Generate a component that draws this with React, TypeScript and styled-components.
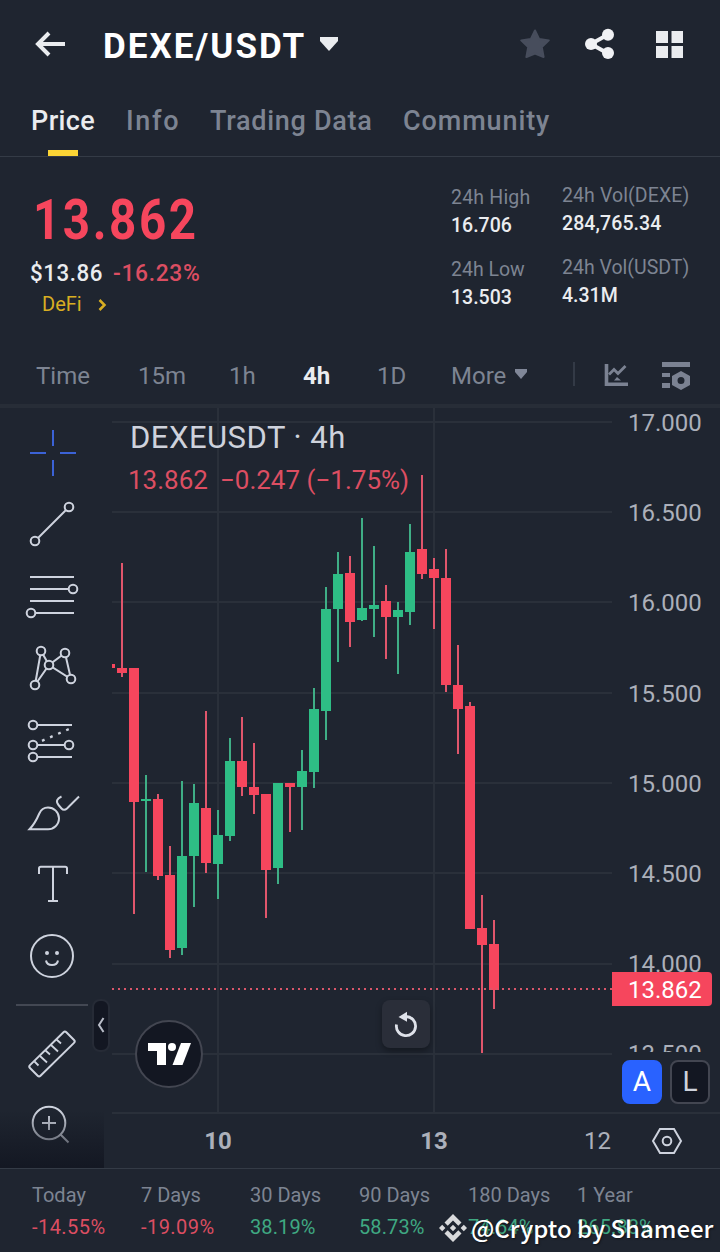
import React from "react";
import styled, { createGlobalStyle } from "styled-components";

const c = {
  bg: "#1f2530",
  line: "#343b46",
  grid: "#2a303a",
  muted: "#7d8492",
  text: "#eaecef",
  red: "#f6465d",
  redSoft: "#dc4e62",
  green: "#2ebd85",
  greenSoft: "#3fa982",
  yellow: "#fcd535",
  gold: "#d8ae22",
  icon: "#ced3de",
  axis: "#acb0ba",
};

const GlobalStyle = createGlobalStyle`
  * { box-sizing: border-box; }
  body { margin: 0; background: ${c.bg}; }
`;

const Page = styled.div`
  position: relative;
  width: 720px;
  height: 1252px;
  overflow: hidden;
  display: flex;
  flex-direction: column;
  background: ${c.bg};
  color: ${c.text};
  font-family: Roboto, "Liberation Sans", sans-serif;
  white-space: nowrap;
`;

const Label = styled.span<{ $ls?: number; $sx?: number }>`
  display: inline-block;
  letter-spacing: ${(p) => p.$ls ?? 0}px;
  transform: ${(p) => (p.$sx ? `scaleX(${p.$sx})` : "none")};
  transform-origin: left center;
`;

const Header = styled.header`
  height: 90px;
  display: flex;
  align-items: center;
  padding: 0 0 2px 34px;
`;
const Pair = styled.h1`
  margin: 4px 0 0 37px;
  width: 203px;
  font-size: 35px;
  font-weight: 700;
  color: #fff;
`;
const HeaderActions = styled.div`
  margin-left: auto;
  display: flex;
  align-items: center;
  gap: 34px;
  padding-right: 37px;
`;

const Tabs = styled.nav`
  height: 67px;
  display: flex;
  padding-left: 31px;
  border-bottom: 1px solid ${c.line};
`;
const Tab = styled.div<{ $active?: boolean; $w: number }>`
  width: ${(p) => p.$w}px;
  display: flex;
  flex-direction: column;
  justify-content: space-between;
  font-size: 27px;
  line-height: 63px;
  font-weight: 500;
  color: ${(p) => (p.$active ? c.text : c.muted)};
`;
const Underline = styled.div`
  width: 30px;
  height: 6px;
  flex: none;
  margin: -3px 0 0 17px;
  background: ${c.yellow};
`;

const Summary = styled.section`
  height: 189px;
  display: flex;
`;
const PriceBlock = styled.div`
  width: 451px;
  padding: 29px 0 0 30px;
`;
const LastPrice = styled.div`
  font-size: 56px;
  line-height: 68px;
  font-weight: 700;
  color: ${c.red};
  padding-left: 3px;
`;
const SubPrice = styled.div`
  display: flex;
  font-size: 24px;
  line-height: 38px;
  font-weight: 500;
`;
const Fiat = styled.div`
  width: 83px;
`;
const Change = styled.div`
  color: ${c.redSoft};
`;
const Tag = styled.div`
  display: flex;
  align-items: center;
  gap: 16px;
  padding-left: 12px;
  font-size: 20px;
  line-height: 25px;
  color: ${c.gold};
`;
const StatColumn = styled.dl<{ $w: number; $top: number; $lh: number }>`
  width: ${(p) => p.$w}px;
  margin: 0;
  padding-top: ${(p) => p.$top}px;
  font-size: 19.5px;
  dt {
    color: ${c.muted};
    line-height: ${(p) => p.$lh}px;
  }
  dd {
    margin: 0 0 ${(p) => 44 - p.$lh}px;
    line-height: 28px;
    font-weight: 500;
  }
`;

const Intervals = styled.nav`
  height: 62px;
  display: flex;
  align-items: center;
  padding: 2px 0 0 36px;
  border-bottom: 4px solid #272d37;
  font-size: 24px;
  color: ${c.muted};
`;
const Interval = styled.div<{ $w: number; $active?: boolean }>`
  width: ${(p) => p.$w}px;
  color: ${(p) => (p.$active ? c.text : c.muted)};
  font-weight: ${(p) => (p.$active ? 700 : 400)};
`;
const Divider = styled.div`
  width: 2px;
  height: 24px;
  margin: -4px 28px 0 45px;
  background: #333a46;
`;

const Chart = styled.main`
  height: 760px;
  display: flex;
`;
const Toolbar = styled.aside`
  position: relative;
  width: 104px;
  margin-right: 8px;
  padding-top: 9px;
  display: flex;
  flex-direction: column;
`;
const ToolRule = styled.hr`
  width: 72px;
  height: 2px;
  border: 0;
  margin: 11px 16px 12px;
  flex: none;
  background: #434853;
`;
const Fade = styled.div`
  position: absolute;
  inset: auto 0 0 0;
  height: 58px;
  background: linear-gradient(rgba(19, 23, 34, 0), rgba(19, 23, 34, 0.95));
`;
const Collapse = styled.button`
  position: absolute;
  left: 92px;
  top: 591px;
  width: 18px;
  height: 53px;
  padding: 0 0 1px;
  display: grid;
  place-items: center;
  border: 2px solid #262b36;
  border-radius: 8px;
  background: #131722;
`;
const ChartBody = styled.div`
  width: 608px;
  display: flex;
  flex-direction: column;
`;
const PlotRow = styled.div`
  height: 704px;
  display: flex;
`;
const Plot = styled.div`
  position: relative;
  width: 500px;
`;
const PlotSvg = styled.svg`
  display: block;
`;
const Legend = styled.div`
  position: absolute;
  left: 18px;
  top: 11px;
`;
const LegendTitle = styled.div`
  font-size: 31px;
  line-height: 38px;
  color: #ced2dc;
`;
const LegendValues = styled.div`
  display: flex;
  gap: 12px;
  margin: 1px 0 0 -2px;
  font-size: 26px;
  line-height: 44px;
  color: ${c.redSoft};
`;
const TvBadge = styled.div`
  position: absolute;
  left: 23px;
  top: 612px;
  width: 68px;
  height: 68px;
  display: grid;
  place-items: center;
  border: 2px solid #434651;
  border-radius: 50%;
  background: #131722;
`;
const ResetButton = styled.button`
  position: absolute;
  left: 270px;
  top: 592px;
  width: 48px;
  height: 48px;
  padding: 0;
  border: 0;
  border-radius: 8px;
  background: #2a2e39;
  box-shadow: 0 3px 6px rgba(0, 0, 0, 0.35);
`;

const PriceScale = styled.div`
  position: relative;
  width: 108px;
  height: 704px;
`;
const ScaleLabels = styled.div`
  height: 644px;
  overflow: hidden;
  font-size: 24px;
  color: ${c.axis};
`;
const ScaleLabel = styled.div`
  height: 90.2px;
  line-height: 90px;
  padding-left: 16px;
  &:first-child {
    margin-top: -30px;
  }
`;
const LastTag = styled.div`
  position: absolute;
  left: 0;
  top: 564px;
  width: 100px;
  height: 34px;
  padding-left: 16px;
  line-height: 36px;
  border-radius: 0 4px 4px 0;
  font-size: 24px;
  color: #fff;
  background: ${c.red};
`;
const ScaleModes = styled.div`
  display: flex;
  gap: 8px;
  padding: 8px 0 0 10px;
`;
const ScaleMode = styled.button<{ $on?: boolean }>`
  width: 40px;
  height: 44px;
  padding: 0;
  border: 2px solid ${(p) => (p.$on ? "#2962ff" : "#434651")};
  border-radius: 8px;
  background: ${(p) => (p.$on ? "#2962ff" : "#131722")};
  color: ${(p) => (p.$on ? "#fff" : "#ced2dc")};
  font: 400 28px/38px Roboto, sans-serif;
`;

const TimeScale = styled.div`
  height: 56px;
  display: flex;
  align-items: center;
  border-top: 2px solid ${c.grid};
  font-size: 24px;
  color: ${c.axis};
`;
const TimeLabel = styled.div<{ $w: number; $bold?: boolean }>`
  width: ${(p) => p.$w}px;
  text-align: center;
  font-weight: ${(p) => (p.$bold ? 700 : 400)};
`;
const TimeEdge = styled.div`
  width: 68px;
  padding-left: 40px;
`;
const TimeSettings = styled.div`
  flex: 1;
  display: flex;
  justify-content: center;
  padding-left: 2px;
`;

const Performance = styled.footer`
  height: 84px;
  display: flex;
  padding: 10px 0 0 32px;
  border-top: 1px solid ${c.line};
`;
const Period = styled.div`
  width: 109px;
  font-size: 20px;
  line-height: 32px;
  color: ${c.muted};
`;
const Gain = styled.div<{ $down?: boolean }>`
  color: ${(p) => (p.$down ? c.redSoft : c.greenSoft)};
`;
const Watermark = styled.div`
  position: absolute;
  left: 439px;
  top: 1208px;
  display: flex;
  align-items: center;
  gap: 4px;
  font: 500 24px/40px "Noto Sans CJK SC", sans-serif;
  color: #fff;
  text-shadow: 1px 1px 2px rgba(0, 0, 0, 0.5);
`;

/* x centre, high, low, body top, body bottom, rising */
const candles: [number, number, number, number, number, number][] = [
  [110, 664, 668, 664, 668, 0],
  [122, 563, 677, 668, 673, 0],
  [134, 668, 914, 668, 802, 0],
  [146, 775, 872, 799, 801, 1],
  [158, 794, 880, 799, 876, 0],
  [170, 846, 958, 875, 950, 0],
  [182, 781, 955, 856, 948, 1],
  [194, 784, 907, 803, 856, 1],
  [206, 711, 873, 808, 863, 0],
  [218, 810, 899, 835, 864, 1],
  [230, 738, 841, 761, 836, 1],
  [242, 717, 796, 761, 787, 0],
  [254, 743, 814, 787, 795, 0],
  [266, 794, 918, 794, 870, 0],
  [278, 783, 884, 783, 868, 1],
  [290, 783, 832, 783, 787, 0],
  [302, 750, 830, 771, 787, 1],
  [314, 688, 788, 709, 772, 1],
  [326, 587, 740, 609, 711, 1],
  [338, 552, 662, 574, 609, 1],
  [350, 556, 647, 573, 622, 0],
  [362, 518, 621, 608, 620, 1],
  [374, 546, 637, 605, 609, 1],
  [386, 585, 659, 601, 617, 0],
  [398, 602, 674, 610, 617, 1],
  [410, 524, 625, 552, 612, 1],
  [422, 475, 579, 549, 574, 0],
  [434, 558, 629, 569, 578, 0],
  [446, 549, 692, 578, 685, 0],
  [458, 645, 754, 685, 709, 0],
  [470, 702, 929, 706, 929, 0],
  [482, 895, 1053, 928, 945, 0],
  [494, 920, 1009, 944, 990, 0],
];

const ToolSvg = styled.svg`
  flex: none;
`;
const ToolIcon = ({ children, color = c.icon }: { children: React.ReactNode; color?: string }) => (
  <ToolSvg width="104" height="72" viewBox="0 0 104 72" fill="none" stroke={color} strokeWidth="2">
    {children}
  </ToolSvg>
);

const Node = ({ x, y }: { x: number; y: number }) => <circle cx={x} cy={y} r="4.3" fill={c.bg} />;

const Tools = () => (
  <Toolbar>
    <ToolIcon color="#3b62d6">
      <path d="M53 13v16M53 43v16M30 36h16M60 36h16" />
    </ToolIcon>
    <ToolIcon>
      <path d="M35 52L69 18" />
      <Node x={35} y={52} />
      <Node x={69} y={18} />
    </ToolIcon>
    <ToolIcon>
      <path d="M30 16h44M30 28h43M30 40h44M31 52h43" />
      <Node x={73} y={28} />
      <Node x={31} y={52} />
    </ToolIcon>
    <ToolIcon>
      <path d="M49 32L41 18L35 52L49 32L65 20L71 46Z" />
      <Node x={41} y={18} />
      <Node x={65} y={20} />
      <Node x={49} y={32} />
      <Node x={35} y={52} />
      <Node x={71} y={46} />
    </ToolIcon>
    <ToolIcon>
      <path d="M33 20h39M33 40h36M33 52h39" />
      <path d="M42 35.800L69 24" strokeWidth="2.400" strokeDasharray="2.800 6" />
      <Node x={33} y={20} />
      <Node x={33} y={40} />
      <Node x={69} y={40} />
      <Node x={33} y={52} />
    </ToolIcon>
    <ToolIcon>
      <path d="M29.500 52.300H47.500A11 11 0 0 0 59 41.300A11 11 0 0 0 48 30.500C44 30.500 41 32.500 39.300 36.500C37 42 34.500 47 29.500 52.300Z" />
      <path d="M61.500 19.500C57 21.500 55.500 24.500 58.500 28L61.500 31.500C63 33.200 65 33.300 67 31.500L79 19.500" />
    </ToolIcon>
    <ToolIcon>
      <path d="M39 25v-5.500q0-1.800 1.800-1.800h24.400q1.800 0 1.800 1.800V25M53 18v34M48 52h10" />
    </ToolIcon>
    <ToolIcon>
      <circle cx="52" cy="35" r="21" />
      <path d="M46 39.500c1 6 11 6 12 0" />
      <circle cx="47" cy="32" r="2" fill={c.icon} stroke="none" />
      <circle cx="57" cy="32" r="2" fill={c.icon} stroke="none" />
    </ToolIcon>
    <ToolRule />
    <ToolIcon>
      <rect x="-25.500" y="-7.500" width="51" height="15" rx="2" transform="translate(52 36) rotate(-44.500)" />
      <path d="M34.500 43.500l4 4M40 38l7 6.500M45.500 32.500l4.500 4M51 27l7 6.500M56.500 21.500l4.500 4" strokeWidth="1.800" />
    </ToolIcon>
    <ToolIcon>
      <circle cx="49" cy="33" r="16.300" />
      <path d="M42 33h14M49 26v14M60.500 44.500l8 8" />
    </ToolIcon>
    <Fade />
    <Collapse>
      <svg width="8" height="16" viewBox="0 0 8 16" fill="none" stroke="#b9bdc8" strokeWidth="2">
        <path d="M6.500 1L2 8l4.500 7" />
      </svg>
    </Collapse>
  </Toolbar>
);

const gridRows = [422, 512, 602, 693, 783, 873, 964, 1054];

const PlotArea = () => (
  <Plot>
    <PlotSvg width="500" height="704" viewBox="112 408 500 704">
      {gridRows.map((y) => (
        <rect key={y} x="112" y={y - 1} width="500" height="2" fill={c.grid} />
      ))}
      <rect x="217" y="408" width="2" height="704" fill={c.grid} />
      <rect x="433" y="408" width="2" height="704" fill={c.grid} />
      {candles.map(([x, hi, lo, top, bottom, up]) => (
        <g key={x}>
          <rect x={x - 1} y={hi} width="2" height={lo - hi} fill={up ? "#3fae86" : "#e0566c"} />
          <rect x={x - 5} y={top} width="10" height={bottom - top} fill={up ? c.green : c.red} />
        </g>
      ))}
      <path d="M112 989H612" stroke="#d9566a" strokeWidth="2" strokeDasharray="2 4" />
    </PlotSvg>
    <Legend>
      <LegendTitle>
        <Label $ls={0.5}>DEXEUSDT · 4h</Label>
      </LegendTitle>
      <LegendValues>
        <span>13.862</span>
        <span>−0.247 (−1.75%)</span>
      </LegendValues>
    </Legend>
    <TvBadge>
      <svg width="44" height="24" viewBox="147 1043 44 24" fill="#fff">
        <path d="M148 1044h18v22h-9v-14h-9z" />
        <circle cx="172" cy="1048" r="4" />
        <path d="M181 1044h10l-8.500 22h-10z" />
      </svg>
    </TvBadge>
    <ResetButton>
      <svg width="48" height="48" viewBox="0 0 48 48" fill="none">
        <path d="M14.500 24.500a9.600 9.600 0 1 0 9.500-8" stroke="#dfe2ea" strokeWidth="2.800" />
        <path d="M16.500 17L25 11.800v10z" fill="#dfe2ea" />
      </svg>
    </ResetButton>
  </Plot>
);

const Scale = () => (
  <PriceScale>
    <ScaleLabels>
      {["17.000", "16.500", "16.000", "15.500", "15.000", "14.500", "14.000", "13.500"].map((p) => (
        <ScaleLabel key={p}>{p}</ScaleLabel>
      ))}
    </ScaleLabels>
    <ScaleModes>
      <ScaleMode $on>A</ScaleMode>
      <ScaleMode>L</ScaleMode>
    </ScaleModes>
    <LastTag>13.862</LastTag>
  </PriceScale>
);

const periods: [string, string, boolean][] = [
  ["Today", "-14.55%", true],
  ["7 Days", "-19.09%", true],
  ["30 Days", "38.19%", false],
  ["90 Days", "58.73%", false],
  ["180 Days", "74.64%", false],
  ["1 Year", "265.88%", false],
];

export default function App() {
  return (
    <Page>
      <GlobalStyle />
      <Header>
        <svg width="32" height="26" viewBox="0 0 32 26" fill="none" stroke="#eaecef" strokeWidth="4">
          <path d="M31 13H4M15 2L4 13l11 11" />
        </svg>
        <Pair>
          <Label $ls={2}>DEXE/USDT</Label>
        </Pair>
        <svg width="46" height="16" viewBox="0 0 46 16" fill="#eaecef">
          <path d="M14 1h18v4l-9 10l-9-10z" />
        </svg>
        <HeaderActions>
          <svg width="32" height="32" viewBox="0 0 32 32">
            <path
              d="M16 2.500l4.200 8.600 9.600 1.300-7 6.700 1.800 9.900L16 25.500 7.400 29l1.800-9.900-7-6.700 9.600-1.300z"
              fill="#474d5c"
              stroke="#474d5c"
              strokeWidth="2"
              strokeLinejoin="round"
            />
          </svg>
          <svg width="32" height="32" viewBox="0 0 32 32" fill="#f0f1f4">
            <path d="M23 6.500L6 16l17 9.500" fill="none" stroke="#f0f1f4" strokeWidth="4" />
            <circle cx="23" cy="6.800" r="6" />
            <circle cx="6" cy="16" r="6" />
            <circle cx="23" cy="25" r="6" />
          </svg>
          <svg width="32" height="32" viewBox="0 0 32 32" fill="#eaecef">
            <path d="M5 3h12v12H5zM20.500 3h11.500v12h-11.500zM5 18h12v12H5zM20.500 18h11.500v12h-11.500z" />
          </svg>
        </HeaderActions>
      </Header>
      <Tabs>
        <Tab $active $w={95}>
          <Label $ls={0.4}>Price</Label>
          <Underline />
        </Tab>
        <Tab $w={84}>
          <Label $ls={1.7}>Info</Label>
        </Tab>
        <Tab $w={193}>
          <Label $ls={0.7}>Trading Data</Label>
        </Tab>
        <Tab $w={150}>
          <Label $ls={0.9}>Community</Label>
        </Tab>
      </Tabs>
      <Summary>
        <PriceBlock>
          <LastPrice>
            <Label $ls={3} $sx={0.85}>13.862</Label>
          </LastPrice>
          <SubPrice>
            <Fiat>
              <Label $ls={0.6} $sx={0.93}>$13.86</Label>
            </Fiat>
            <Change>
              <Label $ls={0.7} $sx={0.95}>-16.23%</Label>
            </Change>
          </SubPrice>
          <Tag>
            <Label>DeFi</Label>
            <svg width="9" height="12" viewBox="0 0 9 12" fill="none" stroke={c.gold} strokeWidth="2.500">
              <path d="M1.500 1l5 5-5 5" />
            </svg>
          </Tag>
        </PriceBlock>
        <StatColumn $w={111} $top={27} $lh={28}>
          <dt><Label $ls={0.2}>24h High</Label></dt>
          <dd><Label>16.706</Label></dd>
          <dt><Label>24h Low</Label></dt>
          <dd><Label>13.503</Label></dd>
        </StatColumn>
        <StatColumn $w={140} $top={24} $lh={29}>
          <dt><Label $ls={0.1}>24h Vol(DEXE)</Label></dt>
          <dd><Label $ls={0.1}>284,765.34</Label></dd>
          <dt><Label>24h Vol(USDT)</Label></dt>
          <dd><Label>4.31M</Label></dd>
        </StatColumn>
      </Summary>
      <Intervals>
        <Interval $w={102}><Label>Time</Label></Interval>
        <Interval $w={91}><Label>15m</Label></Interval>
        <Interval $w={74}><Label>1h</Label></Interval>
        <Interval $w={74} $active><Label>4h</Label></Interval>
        <Interval $w={74}><Label>1D</Label></Interval>
        <Interval $w={63}><Label>More</Label></Interval>
        <svg width="14" height="14" viewBox="0 0 14 14" fill="#808798">
          <path d="M1 0h12v3l-6 7-6-7z" />
        </svg>
        <Divider />
        <svg width="26" height="26" viewBox="0 0 26 26" fill="none" stroke="#7b8292" strokeWidth="3.600">
          <path d="M3.500 1v20.200H25" />
          <path d="M6 11.500l5-5 4 4L22.500 3" strokeWidth="2.800" />
          <path d="M11 17.500l3-3.500 4 3.500z" fill="#7b8292" stroke="none" />
        </svg>
        <svg width="62" height="30" viewBox="-32 0 62 30" fill="#7b8292">
          <path d="M1 1h28v5H1zM1 12h8v4H1zM1 22h8v5H1z" />
          <path fillRule="evenodd" d="M20 10l9 5v9l-9 5-9-5v-9zM20 16a3.500 3.500 0 1 0 0 7a3.500 3.500 0 1 0 0-7z" />
        </svg>
      </Intervals>
      <Chart>
        <Tools />
        <ChartBody>
          <PlotRow>
            <PlotArea />
            <Scale />
          </PlotRow>
          <TimeScale>
            <TimeLabel $w={212} $bold>10</TimeLabel>
            <TimeLabel $w={220} $bold>13</TimeLabel>
            <TimeEdge>12</TimeEdge>
            <TimeSettings>
              <svg width="32" height="28" viewBox="0 0 32 28" fill="none" stroke={c.icon} strokeWidth="2">
                <path d="M9 2h14l7 12-7 12H9L2 14z" />
                <circle cx="16" cy="14" r="4.300" />
              </svg>
            </TimeSettings>
          </TimeScale>
        </ChartBody>
      </Chart>
      <Performance>
        {periods.map(([name, value, down]) => (
          <Period key={name}>
            <div><Label>{name}</Label></div>
            <Gain $down={down}><Label $ls={down ? 0.45 : 0.1}>{value}</Label></Gain>
          </Period>
        ))}
      </Performance>
      <Watermark>
        <svg width="28" height="28" viewBox="0 0 28 28" fill="#d9dadc">
          <path d="M14 0l8.500 8.500-3.200 3.200L14 6.400l-5.300 5.300-3.200-3.200zM14 28l8.500-8.500-3.200-3.200-5.300 5.300-5.300-5.300-3.200 3.200zM3.200 10.800L6.400 14l-3.200 3.200L0 14zM24.800 10.800L28 14l-3.200 3.200-3.200-3.200zM14 10.800l3.200 3.200-3.200 3.200-3.200-3.200z" />
        </svg>
        <Label>@Crypto by Shameer</Label>
      </Watermark>
    </Page>
  );
}
